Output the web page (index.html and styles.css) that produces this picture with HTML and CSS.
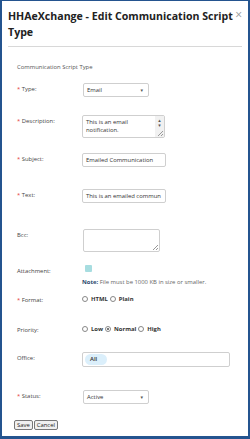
FILE: index.html
```html
<!DOCTYPE html>
<html lang="en">
<head>
    <meta charset="UTF-8">
    <title>Edit Communication Script Type</title>
    <link rel="stylesheet" href="styles.css">
</head>
<body>
    <div class="frame">
        <div class="header">
            <h1 class="title">HHAeXchange - Edit Communication Script Type</h1>
            <span class="close">&times;</span>
        </div>

        <p class="section-title">Communication Script Type</p>

        <div class="form-grid">
            <div class="label"><span class="req">*</span> Type:</div>
            <div><div class="select">Email<span class="caret">&#9662;</span></div></div>

            <div class="label"><span class="req">*</span> Description:</div>
            <div>
                <div class="textarea desc">
                    <span class="ta-text">This is an email notification.</span>
                    <span class="scroll"><span class="arr">&#9652;</span><span class="arr">&#9662;</span><span class="grip"></span></span>
                </div>
            </div>

            <div class="label"><span class="req">*</span> Subject:</div>
            <div><div class="input">Emailed Communication</div></div>

            <div class="label"><span class="req">*</span> Text:</div>
            <div><div class="input">This is an emailed commun</div></div>

            <div class="label">Bcc:</div>
            <div><div class="textarea bcc"><span class="grip"></span></div></div>

            <div class="label">Attachment:</div>
            <div><span class="checkbox"></span></div>

            <div></div>
            <div class="note"><b>Note:</b> File must be 1000 KB in size or smaller.</div>

            <div class="label"><span class="req">*</span> Format:</div>
            <div class="radios">
                <span class="radio"></span><b>HTML</b>
                <span class="radio"></span><b>Plain</b>
            </div>

            <div class="label">Priority:</div>
            <div class="radios">
                <span class="radio"></span><b>Low</b>
                <span class="radio on"></span><b>Normal</b>
                <span class="radio"></span><b>High</b>
            </div>

            <div class="label">Office:</div>
            <div><div class="multi"><span class="chip">All</span></div></div>

            <div class="label"><span class="req">*</span> Status:</div>
            <div><div class="select">Active<span class="caret">&#9662;</span></div></div>
        </div>

        <div class="buttons">
            <button class="btn">Save</button>
            <button class="btn">Cancel</button>
        </div>
    </div>
</body>
</html>
```

FILE: styles.css
```css
* {
    margin: 0;
    padding: 0;
    box-sizing: border-box;
}

body {
    font-family: 'Open Sans', 'DejaVu Sans', sans-serif;
    color: #444;
    background: #fff;
}

.frame {
    width: 250px;
    height: 439px;
    border: 2px solid #24548f;
    border-top-width: 1px;
    border-bottom-width: 3px;
    padding: 0 6px;
    overflow: hidden;
}

.header {
    position: relative;
    padding: 7px 8px 6px 0;
    border-bottom: 1px solid #d8d8d8;
}

.title {
    font-size: 10.6px;
    font-weight: 700;
    line-height: 16px;
    color: #222;
}

.close {
    position: absolute;
    right: 0;
    top: 6px;
    font-size: 12px;
    color: #999;
    line-height: 16px;
}

.section-title {
    font-size: 5.9px;
    color: #555;
    padding: 16px 0 0 9px;
    height: 36px;
}

.form-grid {
    display: grid;
    grid-template-columns: 65px 1fr;
    grid-template-rows: 32px 38px 36px 40px 36px 13px 16px 30px 28px 38px 32px;
    padding-left: 9px;
    font-size: 5.9px;
}

.label {
    padding-top: 2px;
    color: #444;
}

.req {
    color: #e53935;
}

.select,
.input {
    position: relative;
    height: 14px;
    border: 1px solid #cfcfcf;
    border-radius: 2px;
    padding: 0 3px;
    line-height: 12px;
    color: #333;
    white-space: nowrap;
    overflow: hidden;
}

.select {
    width: 66px;
    margin-left: 1px;
}

.input {
    width: 84px;
}

.caret {
    position: absolute;
    right: 5px;
    top: 0;
    font-size: 5px;
    color: #555;
}

.textarea {
    position: relative;
    height: 23px;
    border: 1px solid #cfcfcf;
    border-radius: 2px;
}

.desc {
    width: 83px;
    padding: 2px 12px 0 3px;
    line-height: 8px;
    color: #333;
}

.bcc {
    width: 77px;
    margin-left: 1px;
}

.scroll {
    position: absolute;
    right: 0;
    top: 0;
    bottom: 0;
    width: 9px;
    display: flex;
    flex-direction: column;
    align-items: center;
    background: #f1f1f1;
    font-size: 5px;
    line-height: 5px;
    color: #555;
    padding-top: 2px;
}

.grip {
    position: absolute;
    right: 1px;
    bottom: 1px;
    width: 5px;
    height: 5px;
    background: linear-gradient(135deg, transparent 45%, #999 45%, #999 55%, transparent 55%, transparent 75%, #999 75%, #999 85%, transparent 85%);
}

.checkbox {
    display: block;
    width: 7px;
    height: 7px;
    margin: 0 0 0 3px;
    background: #a7dde0;
    border-radius: 1px;
}

.note {
    color: #666;
    padding-top: 0;
}

.note b {
    color: #2c4a6e;
}

.radios {
    display: flex;
    align-items: center;
    height: 9px;
    color: #333;
}

.radios b {
    margin: 0 2px 0 3px;
}

.radio {
    width: 6px;
    height: 6px;
    border: 1px solid #888;
    border-radius: 50%;
    background: #fff;
}

.radio.on {
    background: radial-gradient(circle, #777 45%, #fff 50%);
}

.multi {
    width: 148px;
    height: 15px;
    border: 1px solid #cfcfcf;
    border-radius: 2px;
    padding: 1px 2px;
}

.chip {
    display: inline-block;
    width: 22px;
    height: 11px;
    line-height: 11px;
    padding-left: 5px;
    border-radius: 6px;
    background: #dbeffb;
    color: #333;
    font-weight: 600;
}

.buttons {
    display: flex;
    gap: 1px;
    padding-left: 6px;
    margin-top: -2px;
}

.btn {
    font-family: 'Open Sans', 'DejaVu Sans', sans-serif;
    font-size: 5.9px;
    height: 10px;
    padding: 0 2px;
    line-height: 7px;
    border: 1px solid #777;
    border-radius: 2px;
    background: #f0f0f0;
    color: #222;
}
```
